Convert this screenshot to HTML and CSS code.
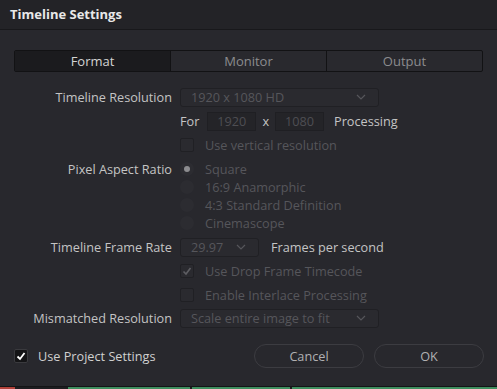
FILE: index.html
```html
<!DOCTYPE html>
<html lang="en">
<head>
    <meta charset="UTF-8">
    <title>Timeline Settings</title>
    <link rel="stylesheet" href="styles.css">
</head>
<body>
    <div class="dialog">
        <div class="titlebar">Timeline Settings</div>
        <div class="content">
            <div class="tabs">
                <div class="tab active">Format</div>
                <div class="tab">Monitor</div>
                <div class="tab">Output</div>
            </div>

            <div class="form">
                <div class="row">
                    <div class="label">Timeline Resolution</div>
                    <div class="select wide">
                        <span>1920 x 1080 HD</span>
                        <svg class="chev" width="10" height="6" viewBox="0 0 10 6"><path d="M1 1l4 4 4-4" fill="none" stroke="currentColor" stroke-width="1.2"/></svg>
                    </div>
                </div>
                <div class="row">
                    <div class="label"></div>
                    <div class="inline">
                        <span class="txt">For</span>
                        <div class="field">1920</div>
                        <span class="txt times">x</span>
                        <div class="field">1080</div>
                        <span class="txt proc">Processing</span>
                    </div>
                </div>
                <div class="row">
                    <div class="label"></div>
                    <div class="check-line">
                        <span class="box"></span>
                        <span class="dim">Use vertical resolution</span>
                    </div>
                </div>
                <div class="row radio-row first-radio">
                    <div class="label">Pixel Aspect Ratio</div>
                    <div class="check-line">
                        <span class="radio on"></span>
                        <span class="dim">Square</span>
                    </div>
                </div>
                <div class="row radio-row">
                    <div class="label"></div>
                    <div class="check-line">
                        <span class="radio"></span>
                        <span class="dim">16:9 Anamorphic</span>
                    </div>
                </div>
                <div class="row radio-row">
                    <div class="label"></div>
                    <div class="check-line">
                        <span class="radio"></span>
                        <span class="dim">4:3 Standard Definition</span>
                    </div>
                </div>
                <div class="row radio-row">
                    <div class="label"></div>
                    <div class="check-line">
                        <span class="radio"></span>
                        <span class="dim">Cinemascope</span>
                    </div>
                </div>
                <div class="row gap-top">
                    <div class="label">Timeline Frame Rate</div>
                    <div class="inline">
                        <div class="select short">
                            <span>29.97</span>
                            <svg class="chev" width="10" height="6" viewBox="0 0 10 6"><path d="M1 1l4 4 4-4" fill="none" stroke="currentColor" stroke-width="1.2"/></svg>
                        </div>
                        <span class="txt fps">Frames per second</span>
                    </div>
                </div>
                <div class="row">
                    <div class="label"></div>
                    <div class="check-line">
                        <span class="box">
                            <svg width="12" height="12" viewBox="0 0 12 12"><path d="M2.5 6.5l2.5 2.5 4.5-6" fill="none" stroke="#5e5e63" stroke-width="1.6"/></svg>
                        </span>
                        <span class="dim">Use Drop Frame Timecode</span>
                    </div>
                </div>
                <div class="row short-row">
                    <div class="label"></div>
                    <div class="check-line">
                        <span class="box"></span>
                        <span class="dim">Enable Interlace Processing</span>
                    </div>
                </div>
                <div class="row">
                    <div class="label">Mismatched Resolution</div>
                    <div class="select wide">
                        <span>Scale entire image to fit</span>
                        <svg class="chev" width="10" height="6" viewBox="0 0 10 6"><path d="M1 1l4 4 4-4" fill="none" stroke="currentColor" stroke-width="1.2"/></svg>
                    </div>
                </div>
            </div>

            <div class="footer">
                <div class="check-line project">
                    <span class="box checked">
                        <svg width="12" height="12" viewBox="0 0 12 12"><path d="M2.5 6.5l2.5 2.5 4.5-6" fill="none" stroke="#fff" stroke-width="1.8"/></svg>
                    </span>
                    <span class="bright">Use Project Settings</span>
                </div>
                <div class="buttons">
                    <button class="btn">Cancel</button>
                    <button class="btn">OK</button>
                </div>
            </div>
        </div>
    </div>
    <div class="strip">
        <span class="seg red"></span>
        <span class="seg dark"></span>
        <span class="seg green g1"></span>
        <span class="seg sep"></span>
        <span class="seg green g2"></span>
        <span class="seg sep"></span>
        <span class="seg green g3"></span>
    </div>
</body>
</html>
```

FILE: styles.css
```css
body {
    margin: 0;
    background-color: #111113;
    font-family: "Open Sans", "DejaVu Sans", sans-serif;
    font-size: 12.7px;
    color: #c4c4c4;
}
.dialog {
    width: 497px;
    height: 386px;
    background-color: #28282d;
    display: flex;
    flex-direction: column;
}
.titlebar {
    height: 29px;
    line-height: 29px;
    padding-left: 10px;
    background-color: #232327;
    border-bottom: 1px solid #18181b;
    color: #e8e8e8;
    font-weight: bold;
    font-size: 13px;
}
.content {
    flex: 1;
    display: flex;
    flex-direction: column;
    padding: 20px 13px 18px 14px;
}
.tabs {
    display: flex;
    height: 20px;
    width: 467px;
    border: 1px solid #121214;
    border-radius: 2px;
    background-color: #29292e;
}
.tab {
    flex: 1;
    text-align: center;
    line-height: 20px;
    font-size: 13px;
    color: #8c8c8e;
    border-left: 1px solid #121214;
}
.tab:first-child {
    border-left: none;
}
.tab.active {
    background-color: #1b1b1e;
    color: #d4d4d4;
}
.form {
    margin-top: 13px;
}
.row {
    display: flex;
    align-items: center;
    height: 24px;
}
.radio-row {
    height: 18px;
}
.first-radio {
    margin-top: 3px;
}
.gap-top {
    margin-top: 3px;
}
.short-row {
    height: 23px;
}
.label {
    width: 158px;
    margin-right: 8px;
    text-align: right;
    color: #c4c4c4;
}
.select {
    display: flex;
    align-items: center;
    justify-content: space-between;
    height: 17px;
    padding: 0 12px 0 10px;
    background-color: #2a2a2f;
    border: 1px solid #202024;
    border-radius: 3px;
    color: #56565b;
}
.select.wide {
    width: 175px;
}
.select.short {
    width: 55px;
}
.chev {
    color: #56565b;
}
.inline {
    display: flex;
    align-items: center;
}
.txt {
    color: #c4c4c4;
}
.field {
    width: 47px;
    height: 17px;
    margin-left: 8px;
    background-color: #242428;
    border: 1px solid #1f1f23;
    text-align: center;
    line-height: 17px;
    color: #4e4e53;
}
.times {
    margin: 0 6px;
}
.times + .field {
    margin-left: 0;
}
.proc {
    margin-left: 10px;
}
.fps {
    margin-left: 12px;
}
.check-line {
    display: flex;
    align-items: center;
}
.box {
    width: 12px;
    height: 12px;
    border: 1px solid #202024;
    background-color: #2a2a2f;
    border-radius: 2px;
    margin-right: 11px;
    display: flex;
    align-items: center;
    justify-content: center;
}
.radio {
    width: 14px;
    height: 14px;
    border-radius: 50%;
    background-color: #2c2c31;
    margin-right: 11px;
    display: flex;
    align-items: center;
    justify-content: center;
}
.radio.on::after {
    content: "";
    width: 6px;
    height: 6px;
    border-radius: 50%;
    background-color: #8c8c8f;
}
.dim {
    color: #56565b;
}
.footer {
    margin-top: auto;
    display: flex;
    align-items: center;
    justify-content: space-between;
}
.box.checked {
    background-color: #141416;
    border-color: #3a3a3e;
    margin-right: 10px;
}
.bright {
    color: #d0d0d0;
}
.buttons {
    display: flex;
    gap: 10px;
}
.btn {
    width: 110px;
    height: 24px;
    border: 1px solid #3c3c41;
    border-radius: 12px;
    background-color: #28282d;
    color: #b0b0b2;
    font-family: "Open Sans", "DejaVu Sans", sans-serif;
    font-size: 12.7px;
    padding: 0;
}
.strip {
    display: flex;
    height: 2px;
    border-top: 1px solid #141416;
}
.seg {
    display: block;
    height: 2px;
}
.red { width: 15px; background-color: #b3423a; }
.dark { width: 53px; background-color: #1d1d20; }
.green { background-color: #3f8f5f; }
.g1 { width: 122px; }
.g2 { width: 98px; }
.g3 { flex: 1; }
.sep { width: 2px; background-color: #1d1d20; }
```
